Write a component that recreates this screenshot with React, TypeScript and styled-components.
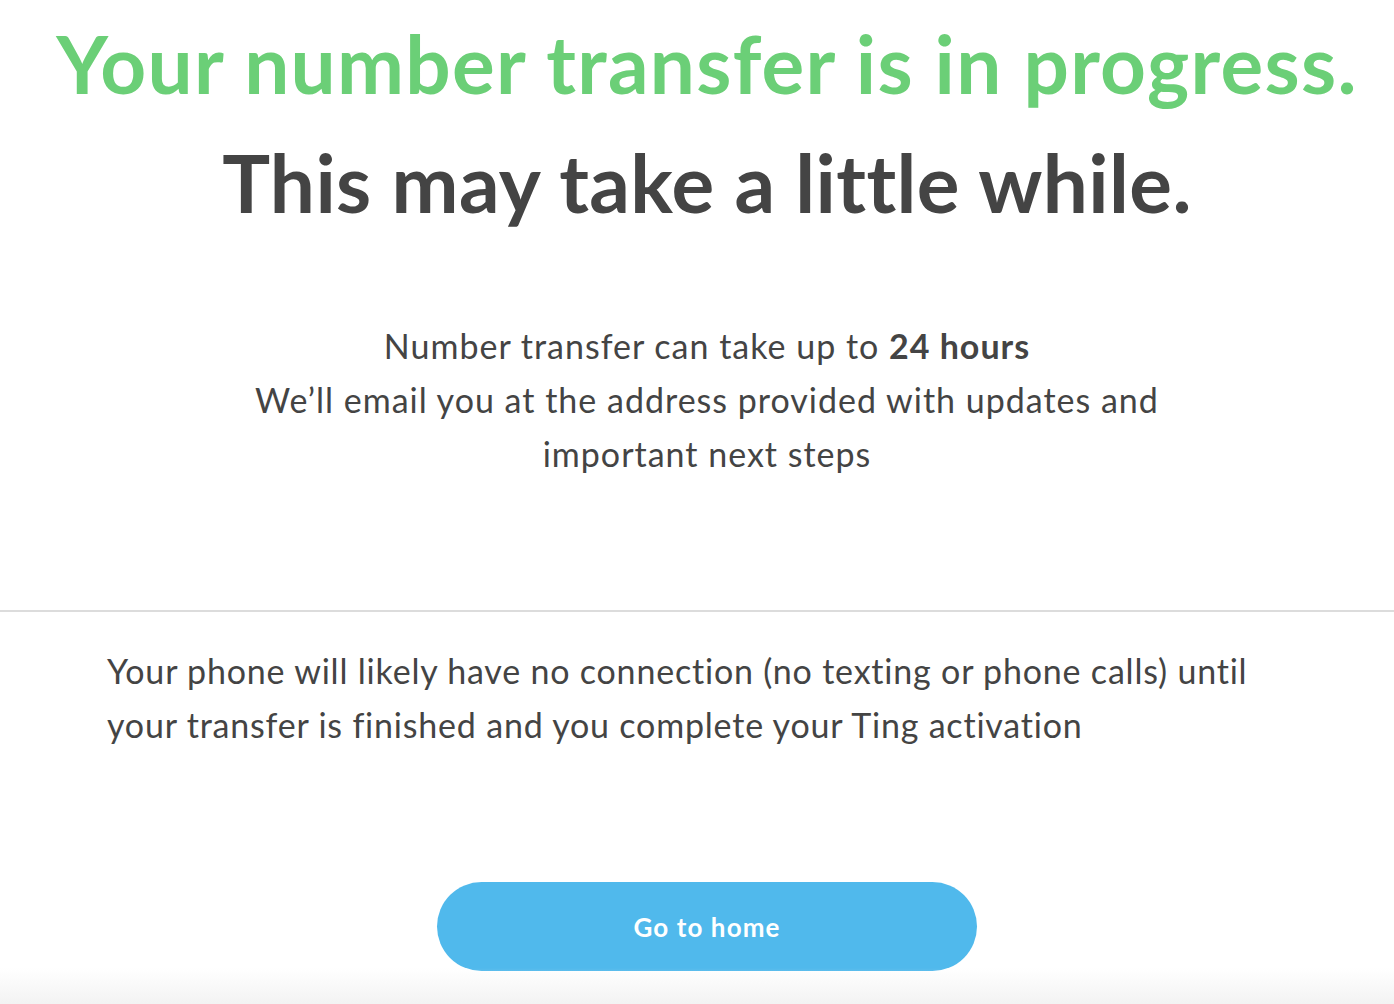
import React from 'react';
import styled, {createGlobalStyle} from 'styled-components';

const colors = {
    green: '#6bcf77',
    text: '#444444',
    blue: '#50b9ec',
    line: '#dcdcdc',
};

const GlobalStyle = createGlobalStyle`
  html, body {
    margin: 0;
    padding: 0;
    background: #ffffff;
  }
  body {
    font-family: Lato, "Open Sans", sans-serif;
    color: ${colors.text};
  }
`;

const Page = styled.div`
  position: relative;
  width: 100%;
  min-height: 1004px;
  overflow: hidden;
  display: flex;
  flex-direction: column;
`;

const Hero = styled.div`
  display: flex;
  flex-direction: column;
  align-items: center;
  padding: 4px 0 0 20px;
`;

const Title = styled.h1<{ $tone: 'green' | 'dark' }>`
  margin: ${p => (p.$tone === 'green' ? '0' : '1px 0 0')};
  font-family: Lato, sans-serif;
  font-weight: 700;
  font-size: 80px;
  line-height: 118px;
  white-space: nowrap;
  color: ${p => (p.$tone === 'green' ? colors.green : colors.text)};
  letter-spacing: ${p => (p.$tone === 'green' ? '1.3px' : '0.4px')};
`;

const Notice = styled.p`
  margin: 78px 0 0;
  width: 940px;
  text-align: center;
  font-size: 34px;
  line-height: 54px;
  font-weight: 400;
  letter-spacing: 1px;

  strong {
    font-weight: 700;
  }
`;

const Divider = styled.hr`
  margin: 129px 0 0;
  border: 0;
  height: 2px;
  background: ${colors.line};
`;

const Warning = styled.p`
  margin: 32px 0 0;
  padding: 0 107px;
  max-width: 1200px;
  font-size: 34px;
  line-height: 54px;
  letter-spacing: 0.8px;
`;

const Actions = styled.div`
  display: flex;
  justify-content: center;
  padding: 130px 0 0 20px;
`;

const HomeButton = styled.button`
  display: flex;
  align-items: center;
  justify-content: center;
  width: 540px;
  height: 89px;
  border: 0;
  border-radius: 45px;
  background: ${colors.blue};
  color: #ffffff;
  font-family: Lato, sans-serif;
  font-size: 26px;
  font-weight: 700;
  letter-spacing: 1.1px;
  cursor: pointer;
`;

const FooterFade = styled.div`
  position: absolute;
  left: 0;
  right: 0;
  bottom: 0;
  height: 36px;
  background: linear-gradient(to bottom, rgba(245, 245, 245, 0), rgba(242, 242, 242, 0.95));
  pointer-events: none;
`;

const App = () => {
    return (
        <Page>
            <GlobalStyle/>
            <Hero>
                <Title $tone="green">Your number transfer is in progress.</Title>
                <Title $tone="dark">This may take a little while.</Title>
                <Notice>
                    Number transfer can take up to <strong>24 hours</strong>
                    <br/>
                    We’ll email you at the address provided with updates and important next steps
                </Notice>
            </Hero>
            <Divider/>
            <Warning>
                Your phone will likely have no connection (no texting or phone calls) until your transfer is
                finished and you complete your Ting activation
            </Warning>
            <Actions>
                <HomeButton>Go to home</HomeButton>
            </Actions>
            <FooterFade/>
        </Page>
    );
};

export default App;
